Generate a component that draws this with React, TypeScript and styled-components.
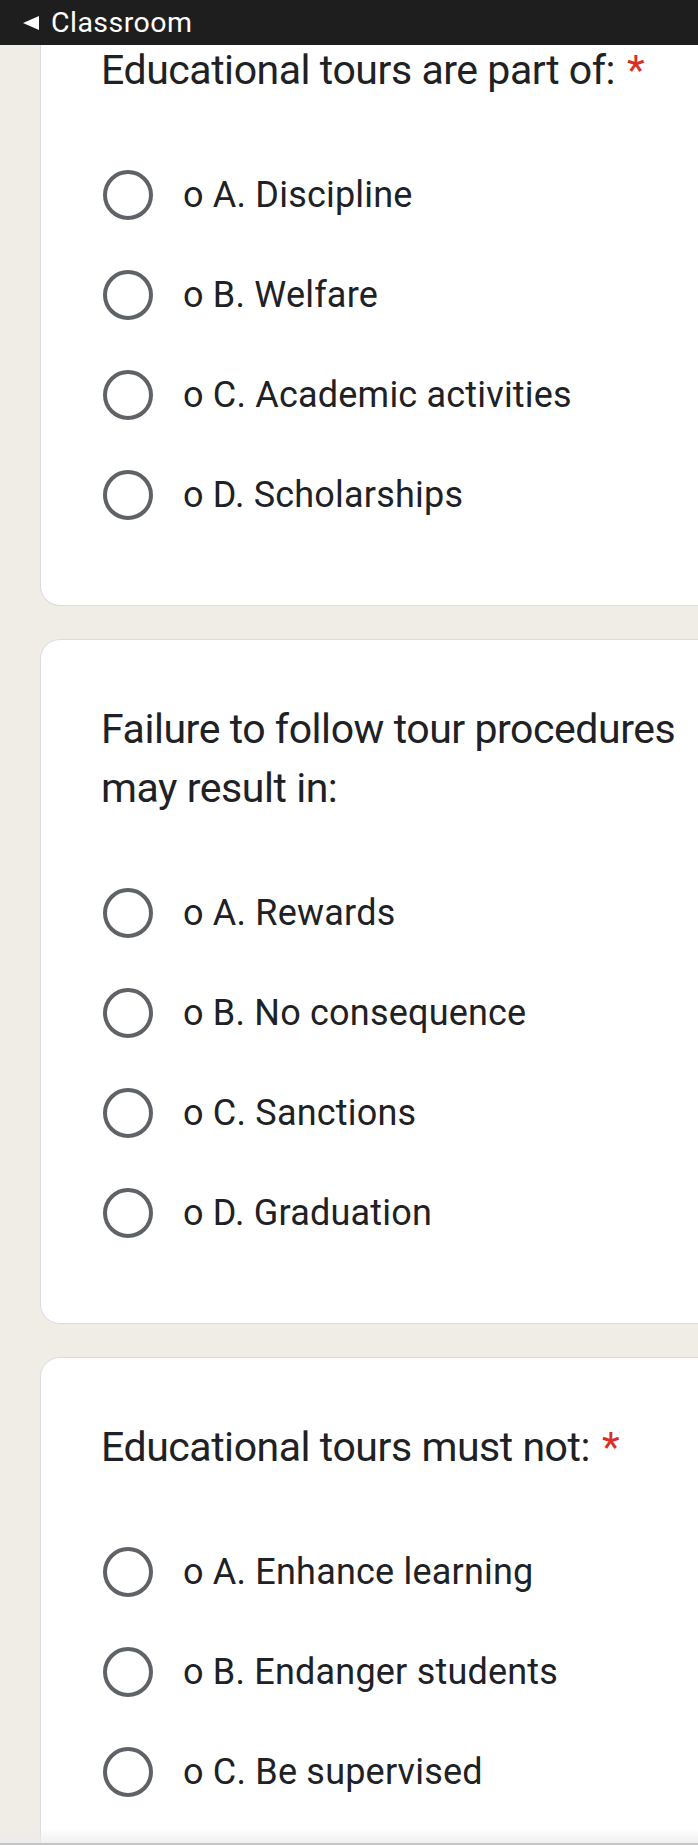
import React from "react";
import styled, { createGlobalStyle } from "styled-components";

const Global = createGlobalStyle`
  html, body {
    margin: 0;
    padding: 0;
    background: #f0ece6;
    overflow-x: hidden;
  }
  body {
    font-family: Roboto, "Noto Sans", "Liberation Sans", sans-serif;
    color: #202124;
  }
`;

const TopBar = styled.header`
  position: fixed;
  top: 0;
  left: 0;
  right: 0;
  height: 45px;
  background: #1e1e1e;
  display: flex;
  align-items: center;
  gap: 12px;
  padding-left: 23px;
  box-sizing: border-box;
  z-index: 10;
`;

const BackArrow = styled.span`
  width: 0;
  height: 0;
  border-top: 7px solid transparent;
  border-bottom: 7px solid transparent;
  border-right: 16px solid #ffffff;
  margin-top: 1px;
`;

const BarTitle = styled.span`
  color: #ffffff;
  font-size: 28.5px;
  font-weight: 400;
  letter-spacing: 0.45px;
  line-height: 1;
  margin-top: 1px;
`;

const BottomEdge = styled.div`
  position: fixed;
  left: 0;
  right: 0;
  bottom: 0;
  height: 14px;
  background: linear-gradient(to bottom, rgba(240, 240, 240, 0), rgba(236, 236, 236, 0.8));
  border-bottom: 2px solid #c4c4c4;
  z-index: 10;
`;

const Page = styled.main`
  display: flex;
  flex-direction: column;
  gap: 33px;
  padding-bottom: 40px;
`;

const Card = styled.section<{ $clipped?: boolean }>`
  margin-left: 40px;
  width: calc(100% + 20px);
  box-sizing: border-box;
  background: #ffffff;
  border: 1px solid #dadce0;
  border-top: ${(p) => (p.$clipped ? "none" : "1px solid #dadce0")};
  border-radius: ${(p) => (p.$clipped ? "0 0 0 20px" : "20px 0 0 20px")};
  padding: ${(p) => (p.$clipped ? "41px" : "60px")} 0 60px 60px;
`;

const Question = styled.div`
  font-size: 41px;
  line-height: 59px;
  letter-spacing: -0.45px;
  color: #202124;
  margin-bottom: 45px;
  padding-right: 40px;
`;

const Required = styled.span`
  color: #d93025;
  margin-left: 12px;
`;

const Options = styled.div`
  display: flex;
  flex-direction: column;
  margin-left: 2px;
`;

const OptionRow = styled.label`
  display: flex;
  align-items: center;
  height: 100px;
  gap: 30px;
`;

const Radio = styled.span`
  width: 50px;
  height: 50px;
  box-sizing: border-box;
  border: 4.5px solid #5f6368;
  border-radius: 50%;
  flex-shrink: 0;
`;

const OptionText = styled.span`
  font-size: 36px;
  line-height: 50px;
  letter-spacing: 0.2px;
  color: #202124;
`;

type Q = { text: string; required?: boolean; options: string[] };

const questions: Q[] = [
  {
    text: "Educational tours are part of:",
    required: true,
    options: ["o A. Discipline", "o B. Welfare", "o C. Academic activities", "o D. Scholarships"],
  },
  {
    text: "Failure to follow tour procedures may result in:",
    options: ["o A. Rewards", "o B. No consequence", "o C. Sanctions", "o D. Graduation"],
  },
  {
    text: "Educational tours must not:",
    required: true,
    options: ["o A. Enhance learning", "o B. Endanger students", "o C. Be supervised"],
  },
];

export default function App() {
  return (
    <>
      <Global />
      <TopBar>
        <BackArrow />
        <BarTitle>Classroom</BarTitle>
      </TopBar>
      <Page>
        {questions.map((q, i) => (
          <Card key={i} $clipped={i === 0}>
            <Question>
              {q.text}
              {q.required && <Required>*</Required>}
            </Question>
            <Options>
              {q.options.map((o) => (
                <OptionRow key={o}>
                  <Radio />
                  <OptionText>{o}</OptionText>
                </OptionRow>
              ))}
            </Options>
          </Card>
        ))}
      </Page>
      <BottomEdge />
    </>
  );
}
